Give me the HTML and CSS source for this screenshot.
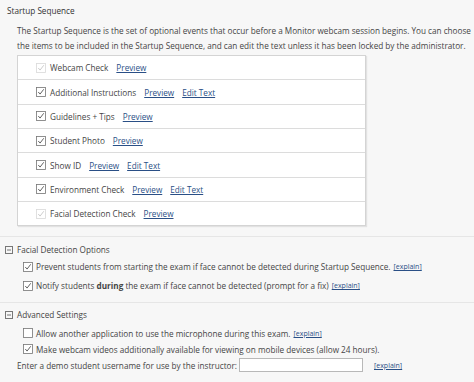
FILE: index.html
```html
<!DOCTYPE html>
<html>
<head>
<meta charset="utf-8">
<link rel="stylesheet" href="styles.css">
</head>
<body>
<div class="page">
  <section class="startup">
    <div class="title">Startup Sequence</div>
    <p class="desc">The Startup Sequence is the set of optional events that occur before a Monitor webcam session begins. You can choose the items to be included in the Startup Sequence, and can edit the text unless it has been locked by the administrator.</p>
    <div class="list">
      <div class="item"><svg class="cb dis" viewBox="0 0 11 11"><rect x="0.5" y="0.5" width="10" height="10"/><path d="M2.5 5.5 L4.5 7.8 L8.5 2.5"/></svg><span>Webcam Check</span><a href="#">Preview</a></div>
      <div class="item"><svg class="cb" viewBox="0 0 11 11"><rect x="0.5" y="0.5" width="10" height="10"/><path d="M2.5 5.5 L4.5 7.8 L8.5 2.5"/></svg><span>Additional Instructions</span><a href="#">Preview</a><a href="#">Edit Text</a></div>
      <div class="item"><svg class="cb" viewBox="0 0 11 11"><rect x="0.5" y="0.5" width="10" height="10"/><path d="M2.5 5.5 L4.5 7.8 L8.5 2.5"/></svg><span>Guidelines + Tips</span><a href="#">Preview</a></div>
      <div class="item"><svg class="cb" viewBox="0 0 11 11"><rect x="0.5" y="0.5" width="10" height="10"/><path d="M2.5 5.5 L4.5 7.8 L8.5 2.5"/></svg><span>Student Photo</span><a href="#">Preview</a></div>
      <div class="item"><svg class="cb" viewBox="0 0 11 11"><rect x="0.5" y="0.5" width="10" height="10"/><path d="M2.5 5.5 L4.5 7.8 L8.5 2.5"/></svg><span>Show ID</span><a href="#">Preview</a><a href="#">Edit Text</a></div>
      <div class="item"><svg class="cb" viewBox="0 0 11 11"><rect x="0.5" y="0.5" width="10" height="10"/><path d="M2.5 5.5 L4.5 7.8 L8.5 2.5"/></svg><span>Environment Check</span><a href="#">Preview</a><a href="#">Edit Text</a></div>
      <div class="item"><svg class="cb dis" viewBox="0 0 11 11"><rect x="0.5" y="0.5" width="10" height="10"/><path d="M2.5 5.5 L4.5 7.8 L8.5 2.5"/></svg><span>Facial Detection Check</span><a href="#">Preview</a></div>
    </div>
  </section>

  <section class="group facial">
    <div class="gtitle"><svg class="tog" viewBox="0 0 8 8"><rect x="0.5" y="0.5" width="7" height="7"/><path d="M2 4 H6"/></svg>Facial Detection Options</div>
    <div class="opt"><svg class="cb sm" viewBox="0 0 11 11"><rect x="0.5" y="0.5" width="10" height="10"/><path d="M2.5 5.5 L4.5 7.8 L8.5 2.5"/></svg><span>Prevent students from starting the exam if face cannot be detected during Startup Sequence.</span><a class="ex" href="#">[explain]</a></div>
    <div class="opt"><svg class="cb sm" viewBox="0 0 11 11"><rect x="0.5" y="0.5" width="10" height="10"/><path d="M2.5 5.5 L4.5 7.8 L8.5 2.5"/></svg><span>Notify students <b>during</b> the exam if face cannot be detected (prompt for a fix)</span><a class="ex" href="#">[explain]</a></div>
  </section>

  <section class="group adv">
    <div class="gtitle"><svg class="tog" viewBox="0 0 8 8"><rect x="0.5" y="0.5" width="7" height="7"/><path d="M2 4 H6"/></svg>Advanced Settings</div>
    <div class="opt tight"><svg class="cb sm" viewBox="0 0 11 11"><rect x="0.5" y="0.5" width="10" height="10"/></svg><span>Allow another application to use the microphone during this exam.</span><a class="ex" href="#">[explain]</a></div>
    <div class="opt tight"><svg class="cb sm" viewBox="0 0 11 11"><rect x="0.5" y="0.5" width="10" height="10"/><path d="M2.5 5.5 L4.5 7.8 L8.5 2.5"/></svg><span>Make webcam videos additionally available for viewing on mobile devices (allow 24 hours).</span></div>
    <div class="demo"><span>Enter a demo student username for use by the instructor:</span><input type="text" class="inp"><a class="ex" href="#">[explain]</a></div>
  </section>
</div>
</body>
</html>
```

FILE: styles.css
```css
html, body {
  margin: 0;
  padding: 0;
  background: #f7f7f7;
}
body {
  font-family: "Open Sans", "DejaVu Sans", sans-serif;
  font-size: 8.2px;
  color: #454545;
}
.page {
  width: 474px;
}
.startup {
  padding-top: 3px;
  padding-bottom: 10px;
}
.title {
  padding-left: 7px;
  line-height: 15px;
  color: #333;
}
.desc {
  margin: 5px 0 0 17px;
  line-height: 15px;
  width: 456px;
}
.list {
  margin: 2px 0 0 17px;
  width: 347px;
  background: #fff;
  border: 1px solid #d4d4d4;
  box-shadow: 1px 1px 1px #e2e2e2;
}
.item {
  display: flex;
  align-items: center;
  height: 23.35px;
  padding-left: 18px;
  border-bottom: 1px solid #dcdcdc;
}
.item:last-child {
  border-bottom: none;
}
.item span {
  margin-left: 4px;
  margin-right: 8px;
}
.item a {
  margin-right: 8px;
}
a {
  color: #2a4f86;
  text-decoration: underline;
}
.cb {
  width: 10px;
  height: 10px;
  flex: none;
  fill: #fff;
  stroke: #777;
  stroke-width: 0.9;
}
.cb path {
  fill: none;
  stroke: #555;
  stroke-width: 1;
}
.cb.dis rect {
  stroke: #dadada;
}
.cb.dis path {
  stroke: #c8c8c8;
}
.cb.sm {
  width: 10px;
  height: 10px;
}
.group {
  border-top: 1px solid #e6e6e6;
}
.facial {
  padding: 5px 0 7px;
}
.gtitle {
  display: flex;
  align-items: center;
  line-height: 15px;
  padding-left: 5px;
  color: #444;
}
.tog {
  width: 8px;
  height: 8px;
  margin-right: 4px;
  fill: none;
  stroke: #777;
  stroke-width: 1;
}
.opt {
  display: flex;
  align-items: center;
  height: 19px;
  padding-left: 23px;
}
.opt.tight {
  height: 16px;
}
.opt span {
  margin-left: 3px;
  margin-right: 3px;
}
.opt b {
  font-weight: 700;
}
.ex {
  font-size: 7px;
}
.adv {
  padding-top: 4px;
  padding-bottom: 10px;
}
.adv .gtitle {
  margin-bottom: 3px;
}
.demo {
  display: flex;
  align-items: center;
  height: 16px;
  padding-left: 17px;
}
.inp {
  width: 124px;
  height: 14px;
  box-sizing: border-box;
  margin: 0 11px 0 2px;
  border: 1px solid #b8b8b8;
  background: #fff;
  padding: 0;
}
```
